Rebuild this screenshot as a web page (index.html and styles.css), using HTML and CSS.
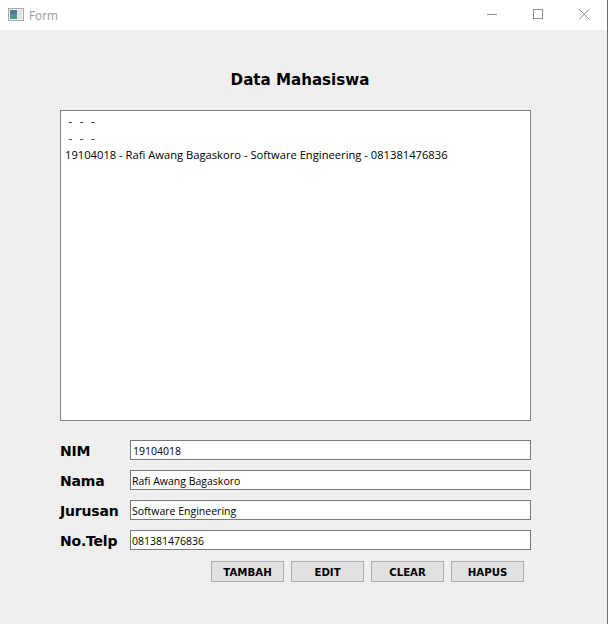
FILE: index.html
```html
<html>
<head>
<meta charset="UTF-8">
<title>Form</title>
<link rel="stylesheet" href="styles.css">
</head>
<body>
<div class="window">
<div class="titlebar">
<svg class="appicon" width="16" height="16" viewBox="0 0 16 16">
<rect x="0.5" y="1.5" width="15" height="12" fill="#eef1f3" stroke="#a3a9ad"/>
<rect x="2" y="3" width="7" height="9" fill="#4f9a8c"/>
<rect x="2" y="3" width="7" height="4" fill="#54789c"/>
<rect x="9" y="3" width="5" height="9" fill="#dfe6e0"/>
</svg>
<span class="wintitle">Form</span>
<div class="wincontrols">
<svg width="46" height="30" viewBox="0 0 46 30"><path d="M18 14.500h10" stroke="#8f8f8f" fill="none"/></svg>
<svg width="46" height="30" viewBox="0 0 46 30"><rect x="18.500" y="9.500" width="9" height="9" stroke="#8f8f8f" fill="none"/></svg>
<svg width="46" height="30" viewBox="0 0 46 30"><path d="M18 9l10.500 10.500M28.500 9L18 19.500" stroke="#8f8f8f" fill="none"/></svg>
</div>
</div>

<div class="content">
<h1>Data Mahasiswa</h1>
<div class="listbox">
<div class="item blank">&nbsp;-&nbsp;&nbsp;-&nbsp;&nbsp;-</div>
<div class="item blank">&nbsp;-&nbsp;&nbsp;-&nbsp;&nbsp;-</div>
<div class="item">19104018 - Rafi Awang Bagaskoro - Software Engineering - 081381476836</div>
</div>

<div class="fields">
<div class="row"><label>NIM</label><input class="nim" type="text" value="19104018"></div>
<div class="row"><label>Nama</label><input type="text" value="Rafi Awang Bagaskoro"></div>
<div class="row"><label>Jurusan</label><input type="text" value="Software Engineering"></div>
<div class="row"><label>No.Telp</label><input type="text" value="081381476836"></div>
</div>

<div class="buttons">
<button>TAMBAH</button>
<button>EDIT</button>
<button>CLEAR</button>
<button>HAPUS</button>
</div>
</div>
</div>
</body></html>
```

FILE: styles.css
```css
html, body{
	margin:0;
	padding:0;
}
body{
	width:608px;
	height:624px;
	overflow:hidden;
	font-family:"Open Sans", "Noto Sans", sans-serif;
	font-size:11.200px;
	color:#000;
}
.window{
	height:624px;
	background:#efefef;
	border-right:1px solid #6e6e6e;
	box-sizing:border-box;
}
.titlebar{
	height:30px;
	background:#fff;
	display:flex;
	align-items:center;
	padding-left:8px;
}
.appicon{
	margin-right:5px;
}
.wintitle{
	color:#9a9a9a;
	font-size:11.800px;
}
.wincontrols{
	margin-left:auto;
	display:flex;
}
.content{
	padding:0 76px 0 60px;
}
h1{
	margin:0;
	padding:40px 0 0 9px;
	height:40px;
	font-family:"DejaVu Sans", sans-serif;
	font-size:15.100px;
	font-weight:bold;
	line-height:20px;
	text-align:center;
}
.listbox{
	width:471px;
	height:311px;
	box-sizing:border-box;
	background:#fff;
	border:1px solid #82828e;
	padding:1px 4px;
}
.item{
	height:17px;
	line-height:17px;
	white-space:nowrap;
}
.blank{
	letter-spacing:0.600px;
}
.fields{
	margin-top:19px;
	display:flex;
	flex-direction:column;
	gap:10px;
}
.row{
	display:flex;
	align-items:center;
	height:20px;
}
.row label{
	width:70px;
	flex:none;
	padding-top:2px;
	font-family:"DejaVu Sans", sans-serif;
	font-size:14px;
	font-weight:bold;
	letter-spacing:-0.200px;
}
.row input{
	width:401px;
	height:20px;
	box-sizing:border-box;
	border:1px solid #7a7a7a;
	background:#fff;
	margin:0;
	padding:1px 1px 0;
	font-family:"Open Sans", "Noto Sans", sans-serif;
	font-size:10.500px;
	color:#000;
	outline:none;
}
.row input.nim{
	padding-left:2px;
}
.buttons{
	margin-top:11px;
	margin-left:151px;
	display:flex;
	gap:7px;
}
.buttons button{
	width:73px;
	height:21px;
	box-sizing:border-box;
	background:#e1e1e1;
	border:1px solid #adadad;
	margin:0;
	padding:1px 0 0;
	font-family:"DejaVu Sans", sans-serif;
	font-size:10.200px;
	font-weight:bold;
	color:#000;
}
```
